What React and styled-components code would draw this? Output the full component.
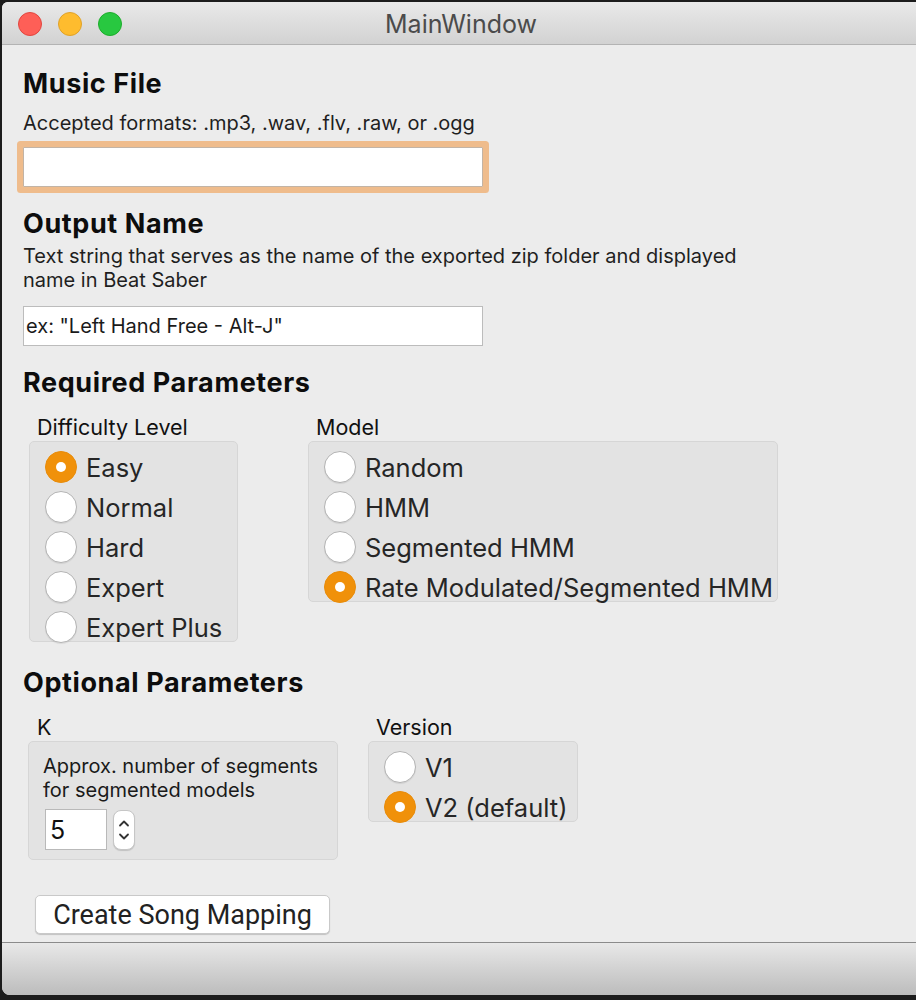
import React from "react";
import styled, { createGlobalStyle } from "styled-components";

const GlobalStyle = createGlobalStyle`
  html, body {
    margin: 0;
    padding: 0;
    background: #1c1c1c;
  }
  body {
    font-family: Inter, "Helvetica Neue", "Liberation Sans", Arial, sans-serif;
    -webkit-font-smoothing: antialiased;
  }
  * {
    box-sizing: border-box;
  }
`;

const Window = styled.div`
  margin: 2px 0 0 2px;
  height: 993px;
  background: #ececec;
  border-radius: 6px 0 0 8px;
  overflow: hidden;
  display: flex;
  flex-direction: column;
`;

const TitleBar = styled.div`
  height: 43px;
  flex-shrink: 0;
  display: grid;
  grid-template-columns: 1fr auto 1fr;
  align-items: center;
  padding-top: 1px;
  background: linear-gradient(#e9e9e9, #d2d2d2);
  border-bottom: 1px solid #b3b3b3;
`;

const Lights = styled.div`
  display: flex;
  gap: 16px;
  margin-left: 16px;
`;

const Light = styled.span`
  width: 24px;
  height: 24px;
  border-radius: 50%;
  background: ${(p) => p.$color};
  border: 1px solid ${(p) => p.$edge};
`;

const Title = styled.div`
  font-size: 25px;
  color: #4b4b4b;
  padding-left: 4px;
`;

const Content = styled.div`
  flex: 1;
  padding: 0 21px;
  color: #1f1f1f;
`;

const Heading = styled.h2`
  margin: ${(p) => p.$top}px 0 0;
  font-size: 27px;
  line-height: 30px;
  letter-spacing: 0.6px;
  font-weight: 700;
  color: #0d0d0d;
`;

const Desc = styled.p`
  margin: ${(p) => p.$top}px 0 0;
  font-size: 20px;
  line-height: 24px;
  max-width: 745px;
`;

const TextField = styled.input`
  display: block;
  margin-top: ${(p) => p.$top}px;
  width: 460px;
  height: 40px;
  padding: 0 2px;
  background: #fff;
  border: 1px solid ${(p) => (p.$focused ? "#c2b4a6" : "#bcbcbc")};
  border-radius: ${(p) => (p.$focused ? "1px" : "0")};
  box-shadow: ${(p) => (p.$focused ? "0 0 0 6px #efbc8c" : "none")};
  font: inherit;
  font-size: 20px;
  color: #1a1a1a;
  outline: none;
`;

const ParamRow = styled.div`
  display: flex;
  align-items: flex-start;
  gap: ${(p) => p.$gap}px;
  margin: 17px 0 0 ${(p) => p.$left}px;
`;

const Group = styled.div`
  display: flex;
  flex-direction: column;
  width: ${(p) => p.$width}px;
`;

const GroupLabel = styled.div`
  font-size: 21.5px;
  line-height: 24px;
  padding-left: ${(p) => p.$indent}px;
  margin-bottom: 2px;
  color: #111;
`;

const GroupBox = styled.div`
  background: #e3e3e3;
  border: 1px solid #d6d6d6;
  border-radius: 5px;
  padding: ${(p) => p.$pad};
`;

const RadioList = styled.div`
  display: flex;
  flex-direction: column;
  margin-bottom: -6px;
`;

const RadioRow = styled.label`
  display: flex;
  align-items: center;
  gap: 9px;
  height: 40px;
  font-size: 25.5px;
  color: #262626;
  white-space: nowrap;
`;

const RadioDot = styled.span`
  flex-shrink: 0;
  width: 32px;
  height: 32px;
  border-radius: 50%;
  display: flex;
  align-items: center;
  justify-content: center;
  background: ${(p) => (p.$checked ? "#f0910a" : "#ffffff")};
  border: 1px solid ${(p) => (p.$checked ? "#e88c0b" : "#b3b3b3")};
  box-shadow: ${(p) =>
    p.$checked ? "none" : "0 1px 1px rgba(0, 0, 0, 0.08)"};

  &::after {
    content: "";
    display: ${(p) => (p.$checked ? "block" : "none")};
    width: 10px;
    height: 10px;
    border-radius: 50%;
    background: #fff;
  }
`;

const HintText = styled.div`
  font-size: 20px;
  line-height: 24px;
  color: #1a1a1a;
`;

const SpinRow = styled.div`
  display: flex;
  align-items: center;
  gap: 6px;
  margin: 7px 0 0 2px;
`;

const SpinInput = styled.div`
  width: 62px;
  height: 41px;
  background: #fff;
  border: 1px solid #b9b9b9;
  display: flex;
  align-items: center;
  padding-left: 4px;
  font-size: 25px;
  color: #111;
`;

const Stepper = styled.div`
  width: 22px;
  height: 40px;
  background: #fff;
  border: 1px solid #c6c6c6;
  border-radius: 8px;
  box-shadow: 0 1px 1px rgba(0, 0, 0, 0.15);
  display: flex;
  align-items: center;
  justify-content: center;
`;

const Button = styled.button`
  display: block;
  margin: 35px 0 0 12px;
  width: 295px;
  height: 39px;
  background: #fff;
  border: 1px solid #c9c9c9;
  border-radius: 5px;
  box-shadow: 0 1px 1px rgba(0, 0, 0, 0.18);
  font-family: Roboto, Inter, sans-serif;
  font-size: 27px;
  color: #222;
  padding: 0;
`;

const Footer = styled.div`
  height: 53px;
  flex-shrink: 0;
  border-top: 1px solid #8b8b8b;
  background: linear-gradient(#e8e8e8, #bcbcbc);
`;

const Radio = ({ label, checked }) => (
  <RadioRow>
    <RadioDot $checked={checked} />
    {label}
  </RadioRow>
);

const difficulties = ["Easy", "Normal", "Hard", "Expert", "Expert Plus"];
const models = [
  "Random",
  "HMM",
  "Segmented HMM",
  "Rate Modulated/Segmented HMM",
];

export default function App() {
  return (
    <>
      <GlobalStyle />
      <Window>
        <TitleBar>
          <Lights>
            <Light $color="#fe5f57" $edge="#e2463f" />
            <Light $color="#febc2e" $edge="#e0a229" />
            <Light $color="#28c840" $edge="#1dad2b" />
          </Lights>
          <Title>MainWindow</Title>
          <div />
        </TitleBar>

        <Content>
          <Heading $top={24}>Music File</Heading>
          <Desc $top={12}>Accepted formats: .mp3, .wav, .flv, .raw, or .ogg</Desc>
          <TextField $top={12} $focused readOnly value="" />

          <Heading $top={22}>Output Name</Heading>
          <Desc $top={5}>
            Text string that serves as the name of the exported zip folder and
            displayed name in Beat Saber
          </Desc>
          <TextField $top={14} readOnly value={'ex: "Left Hand Free - Alt-J"'} />

          <Heading $top={22}>Required Parameters</Heading>
          <ParamRow $left={6} $gap={70}>
            <Group $width={209}>
              <GroupLabel $indent={8}>Difficulty Level</GroupLabel>
              <GroupBox $pad="5px 0 0 15px">
                <RadioList>
                  {difficulties.map((d, i) => (
                    <Radio key={d} label={d} checked={i === 0} />
                  ))}
                </RadioList>
              </GroupBox>
            </Group>
            <Group $width={470}>
              <GroupLabel $indent={8}>Model</GroupLabel>
              <GroupBox $pad="5px 0 0 15px">
                <RadioList>
                  {models.map((m, i) => (
                    <Radio key={m} label={m} checked={i === 3} />
                  ))}
                </RadioList>
              </GroupBox>
            </Group>
          </ParamRow>

          <Heading $top={26}>Optional Parameters</Heading>
          <ParamRow $left={5} $gap={30}>
            <Group $width={310}>
              <GroupLabel $indent={9}>K</GroupLabel>
              <GroupBox $pad="12px 0 9px 14px">
                <HintText>
                  Approx. number of segments
                  <br />
                  for segmented models
                </HintText>
                <SpinRow>
                  <SpinInput>5</SpinInput>
                  <Stepper>
                    <svg width="12" height="26" viewBox="0 0 12 26" fill="none">
                      <path
                        d="M2 8.5 L6 4.5 L10 8.5"
                        stroke="#333"
                        strokeWidth="1.8"
                        strokeLinecap="round"
                        strokeLinejoin="round"
                      />
                      <path
                        d="M2 17.5 L6 21.5 L10 17.5"
                        stroke="#333"
                        strokeWidth="1.8"
                        strokeLinecap="round"
                        strokeLinejoin="round"
                      />
                    </svg>
                  </Stepper>
                </SpinRow>
              </GroupBox>
            </Group>
            <Group $width={210}>
              <GroupLabel $indent={8}>Version</GroupLabel>
              <GroupBox $pad="5px 0 0 15px">
                <RadioList>
                  <Radio label="V1" />
                  <Radio label="V2 (default)" checked />
                </RadioList>
              </GroupBox>
            </Group>
          </ParamRow>

          <Button>Create Song Mapping</Button>
        </Content>

        <Footer />
      </Window>
    </>
  );
}
